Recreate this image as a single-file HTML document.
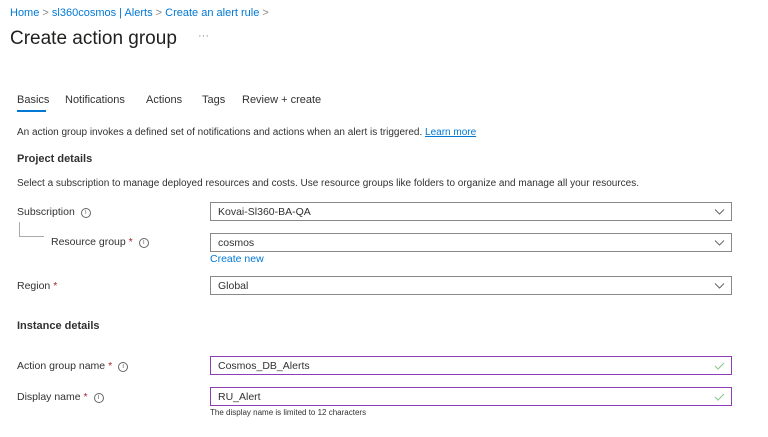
<!DOCTYPE html><html><head><style>
body{margin:0;width:768px;height:437px;background:#fff;font-family:"Liberation Sans",sans-serif;color:#323130;position:relative;overflow:hidden}
.a{position:absolute;white-space:nowrap}
.s{font-size:10.5px}
.lnk{color:#0078d4}
.box{position:absolute;left:210px;width:513px;height:17px;border:1px solid #8a8886;font-size:10.5px;line-height:18px;padding-left:7px;box-sizing:content-box}
.box.p{border-color:#8a3fb8}
.chev{position:absolute;right:6px;top:3px}
.info{display:inline-block;width:8px;height:8px;border:1px solid #666;border-radius:50%;font-size:7px;line-height:8px;text-align:center;margin-left:6px;vertical-align:1px;color:#666}
.req{color:#a4262c}
</style></head><body>
<div class="a s" style="left:10px;top:7px;font-size:11px"><span class="lnk">Home</span> <span style="color:#888">&gt;</span> <span class="lnk">sl360cosmos | Alerts</span> <span style="color:#888">&gt;</span> <span class="lnk">Create an alert rule</span> <span style="color:#888">&gt;</span></div>
<div class="a" style="left:10px;top:28px;font-size:19px;color:#201f1e">Create action group</div>
<div class="a" style="left:198px;top:30px;font-size:11px;color:#888">···</div>
<div class="a" style="left:17px;top:94px;font-size:11px">Basics</div>
<div class="a" style="left:17px;top:110px;width:29px;height:2px;background:#0078d4"></div>
<div class="a" style="left:65px;top:94px;font-size:11px">Notifications</div>
<div class="a" style="left:146px;top:94px;font-size:11px">Actions</div>
<div class="a" style="left:202px;top:94px;font-size:11px">Tags</div>
<div class="a" style="left:242px;top:94px;font-size:11px">Review + create</div>
<div class="a s" style="left:17px;top:127px;font-size:10px">An action group invokes a defined set of notifications and actions when an alert is triggered. <span class="lnk" style="text-decoration:underline">Learn more</span></div>
<div class="a" style="left:17px;top:153px;font-size:11px;font-weight:bold;color:#323130">Project details</div>
<div class="a" style="left:17px;top:178px;font-size:10px">Select a subscription to manage deployed resources and costs. Use resource groups like folders to organize and manage all your resources.</div>
<div class="a s" style="left:17px;top:206px">Subscription<span class="info">i</span></div>
<div class="a" style="left:19px;top:222px;width:24px;height:14px;border-left:1px solid #aaa;border-bottom:1px solid #aaa"></div>
<div class="a s" style="left:51px;top:236px">Resource group <span class="req">*</span><span class="info">i</span></div>
<div class="a s" style="left:17px;top:280px">Region <span class="req">*</span></div>
<div class="box" style="top:202px">Kovai-Sl360-BA-QA<svg class="chev" width="11" height="11" viewBox="0 0 11 11"><path d="M1 3.5l4.5 4.5 4.5-4.5" fill="none" stroke="#666" stroke-width="1"/></svg></div>
<div class="box" style="top:233px">cosmos<svg class="chev" width="11" height="11" viewBox="0 0 11 11"><path d="M1 3.5l4.5 4.5 4.5-4.5" fill="none" stroke="#666" stroke-width="1"/></svg></div>
<div class="a s lnk" style="left:210px;top:253px">Create new</div>
<div class="box" style="top:276px">Global<svg class="chev" width="11" height="11" viewBox="0 0 11 11"><path d="M1 3.5l4.5 4.5 4.5-4.5" fill="none" stroke="#666" stroke-width="1"/></svg></div>
<div class="a" style="left:17px;top:320px;font-size:11px;font-weight:bold">Instance details</div>
<div class="a s" style="left:17px;top:360px">Action group name <span class="req">*</span><span class="info">i</span></div>
<div class="a s" style="left:17px;top:391px">Display name <span class="req">*</span><span class="info">i</span></div>
<div class="box p" style="top:356px">Cosmos_DB_Alerts<svg class="chev" width="11" height="11" viewBox="0 0 11 11"><path d="M1 6l3 3 6-6" fill="none" stroke="#8bc48a" stroke-width="1"/></svg></div>
<div class="box p" style="top:387px">RU_Alert<svg class="chev" width="11" height="11" viewBox="0 0 11 11"><path d="M1 6l3 3 6-6" fill="none" stroke="#8bc48a" stroke-width="1"/></svg></div>
<div class="a" style="left:210px;top:408px;font-size:8px">The display name is limited to 12 characters</div>
</body></html>
